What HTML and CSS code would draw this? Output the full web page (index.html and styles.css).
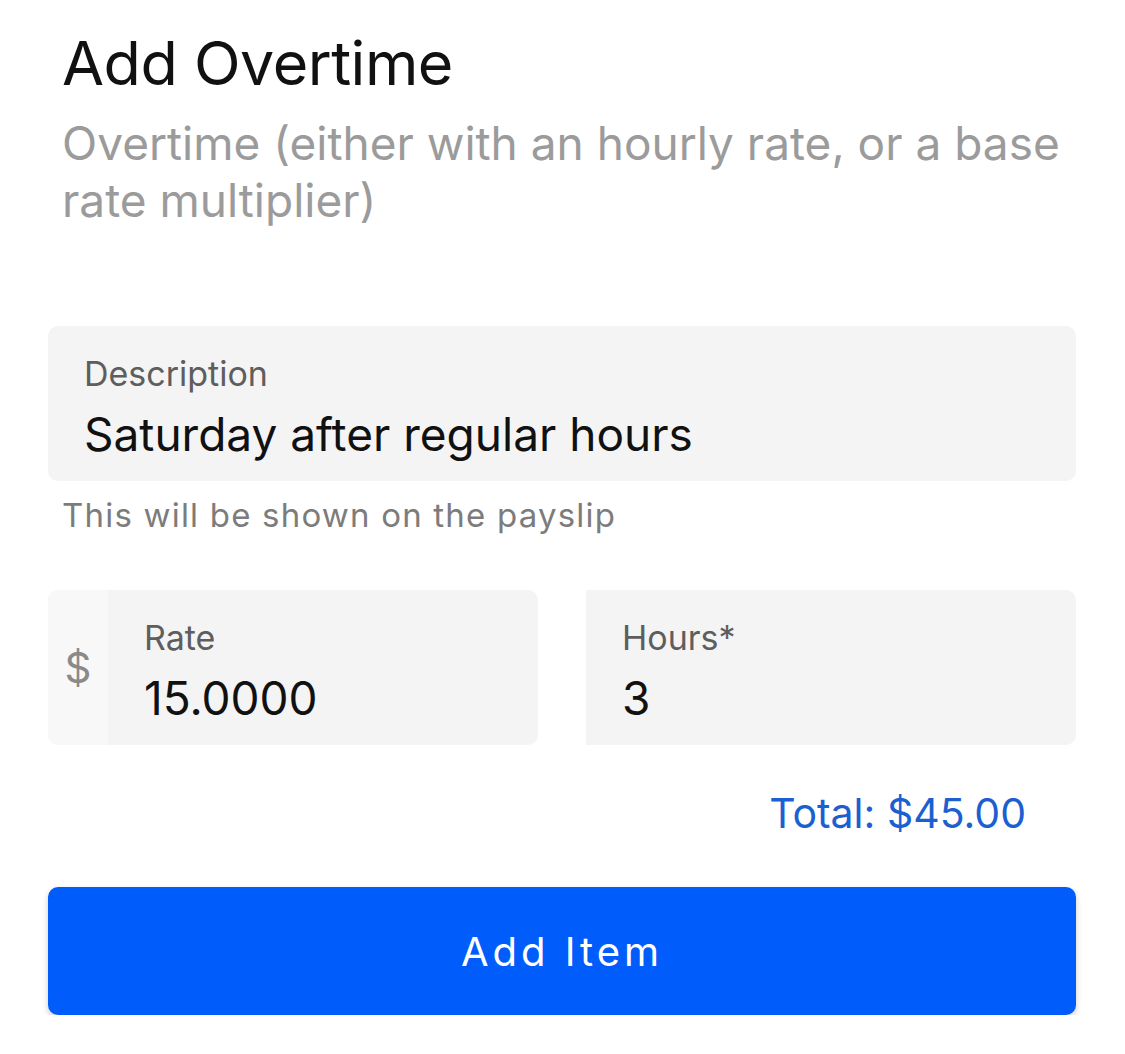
FILE: index.html
```html
<!DOCTYPE html>
<html>

<head>
  <meta charset="UTF-8">
  <title>Add Overtime</title>
  <link rel="stylesheet" href="styles.css">
</head>

<body>
  <div class="container">
    <div class="header">
      <h1>Add Overtime</h1>
      <p class="subtitle">Overtime (either with an hourly rate, or a base rate multiplier)</p>
    </div>

    <div class="field">
      <div class="field-body">
        <label for="description">Description</label>
        <div class="value" id="description">Saturday after regular hours</div>
      </div>
    </div>
    <div class="hint">This will be shown on the payslip</div>

    <div class="row">
      <div class="field">
        <div class="prefix">$</div>
        <div class="field-body">
          <label for="rate">Rate</label>
          <div class="value" id="rate">15.0000</div>
        </div>
      </div>
      <div class="field field-flat">
        <div class="field-body">
          <label for="hours">Hours*</label>
          <div class="value" id="hours">3</div>
        </div>
      </div>
    </div>

    <div class="total">Total: $45.00</div>

    <button class="add-btn">Add Item</button>
  </div>
</body>

</html>
```

FILE: styles.css
```css
body {
  margin: 0;
  font-family: Inter, "Noto Sans", sans-serif;
  background-color: #fff;
  color: #111;
}

.container {
  width: 1028px;
  padding: 25px 0 0 48px;
}

.header {
  padding: 0 14px;
  margin-bottom: 97px;
}

.header h1 {
  margin: 0;
  font-size: 61px;
  font-weight: 400;
  line-height: 76px;
  letter-spacing: -0.5px;
}

.subtitle {
  margin: 14px 0 0;
  font-size: 46px;
  line-height: 57px;
  color: #9b9b9b;
}

.field {
  display: flex;
  height: 155px;
  background-color: #f4f4f4;
  border-radius: 10px;
  overflow: hidden;
}

.field-body {
  display: flex;
  flex-direction: column;
  justify-content: center;
  padding: 0 36px;
}

.field-body label {
  font-size: 34px;
  line-height: 60px;
  color: #5e5e5e;
}

.field-body .value {
  font-size: 46px;
  line-height: 60px;
  color: #111;
}

.field-flat {
  border-radius: 0 10px 10px 0;
}

.prefix {
  display: flex;
  align-items: center;
  justify-content: center;
  width: 60px;
  background-color: #f8f8f8;
  font-size: 42px;
  color: #8a8a8a;
}

.hint {
  padding: 14px 14px 0;
  height: 95px;
  font-size: 33px;
  line-height: 40px;
  letter-spacing: 1.2px;
  color: #7c7c7c;
}

.row {
  display: grid;
  grid-template-columns: 1fr 1fr;
  gap: 48px;
}

.total {
  padding: 42px 50px 0 0;
  height: 100px;
  text-align: right;
  font-size: 41px;
  line-height: 52px;
  color: #1b5fd1;
}

.add-btn {
  display: block;
  width: 100%;
  height: 128px;
  border: none;
  border-radius: 10px;
  background-color: #005cfa;
  box-shadow: 0 3px 6px rgba(0, 0, 0, 0.2);
  color: #fff;
  font-family: inherit;
  font-size: 40px;
  letter-spacing: 4px;
  cursor: pointer;
}
```
